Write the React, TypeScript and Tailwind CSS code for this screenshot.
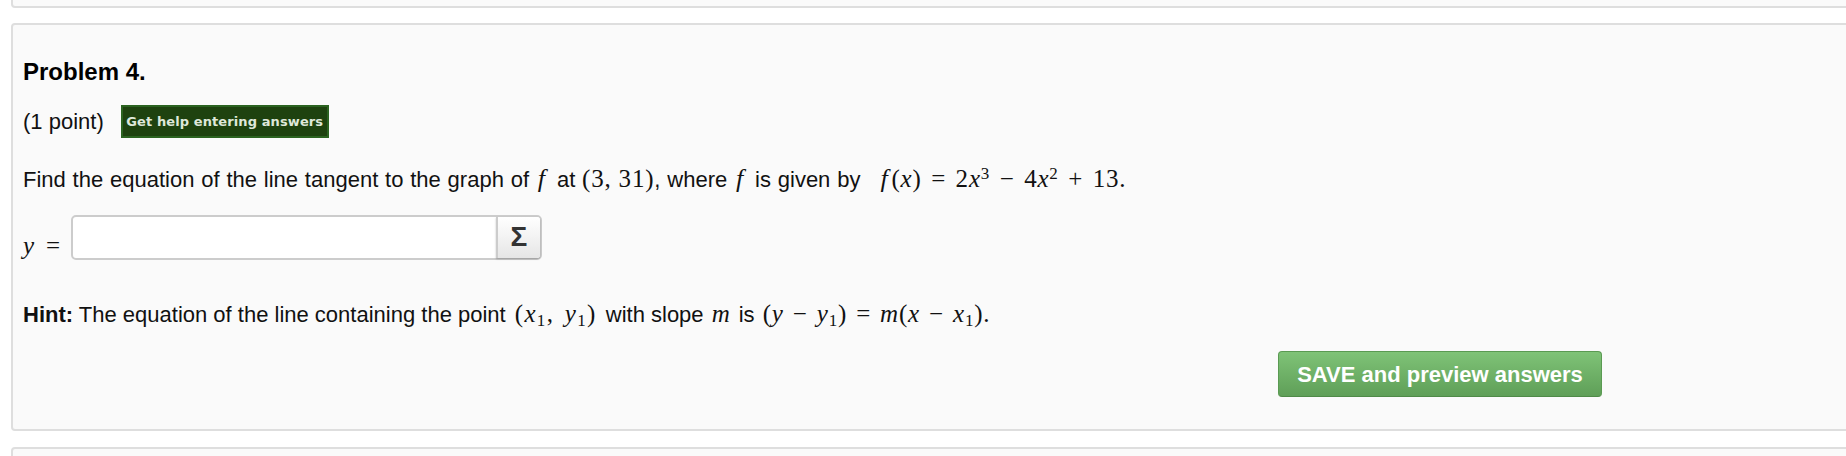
const serif = "font-['Liberation_Serif',serif]";

function V({ children }: { children: React.ReactNode }) {
  return <i className={serif}>{children}</i>;
}
function Sub({ children }: { children: React.ReactNode }) {
  return <sub className={`${serif} text-[17px]`}>{children}</sub>;
}
function Sup({ children }: { children: React.ReactNode }) {
  return <sup className={`${serif} text-[17px]`}>{children}</sup>;
}
function M({ children, className = "" }: { children: React.ReactNode; className?: string }) {
  return <span className={`${serif} text-[25px] tracking-[0.8px] ${className}`}>{children}</span>;
}
// italic f from the math font, it sits a bit wider than the running text
function F() {
  return <span className={`${serif} ml-[2px] mr-[5px] text-[26px]`}><V>f</V></span>;
}

export default function App() {
  return (
    <div className="h-[456px] overflow-hidden bg-white font-['Liberation_Sans',sans-serif] text-[22px] text-[#111]">
      <div className="h-[8px] ml-[11px] mr-[-8px] mb-[15px] rounded-b-[4px] border-2 border-t-0 border-[#dedede] bg-[#fafafa]" />

      <div className="h-[408px] ml-[11px] mr-[-8px] mb-[16px] rounded-[4px] border-2 border-[#dedede] bg-[#fafafa] pl-[10px] pt-[32px]">
        <h3 className="text-[24px] font-bold leading-[30px] text-black">Problem 4.</h3>

        <div className="mt-[18px] flex items-center h-[33px]">
          <span>(1 point)</span>
          <span className="ml-[17px] flex h-[33px] w-[208px] items-center justify-center border-2 border-[#2b6320] bg-[#1e420f] font-['DejaVu_Sans',sans-serif] text-[13px] font-bold tracking-[0.1px] text-[#dfe8da]">
            Get help entering answers
          </span>
        </div>

        <p className="mt-[26px] leading-[30px] [word-spacing:0.7px]">
          Find the equation of the line tangent to the graph of <F /> at <M className="[word-spacing:0px]">(3, 31)</M>, where <F /> is given by
          <M className="ml-[20px] [word-spacing:2.5px]">
            <span className="mr-[3px] text-[26px]"><V>f</V></span>(<V>x</V>) = 2<V>x</V><Sup>3</Sup> − 4<V>x</V><Sup>2</Sup> + 13.
          </M>
        </p>

        <div className="mt-[20px] flex h-[45px] items-end">
          <div className="mb-[-4px]">
            <M className="[word-spacing:4px]">
              <V>y</V> =
            </M>
          </div>
          <div className="ml-[10px] flex h-[45px] w-[471px] self-start rounded-[5px] border-2 border-[#cccccc] bg-white">
            <div className="flex-1" />
            <div className="flex w-[44px] items-center justify-center rounded-r-[3px] border-l-2 border-[#cccccc] bg-gradient-to-b from-white to-[#e6e6e6] pb-[2px] text-[28px] font-bold text-[#333] shadow-[0_1px_2px_rgba(0,0,0,0.25)]">
              Σ
            </div>
          </div>
        </div>

        <p className="mt-[39px] leading-[30px]">
          <b>Hint:</b> The equation of the line containing the point{" "}
          <M className="mx-[3px] tracking-[1.3px] [word-spacing:3px]">
            (<V>x</V>
            <Sub>1</Sub>, <V>y</V>
            <Sub>1</Sub>)
          </M>{" "}
          with slope <M className="mx-[2px]"><V>m</V></M> is{" "}
          <M className="ml-[2px] [word-spacing:2px]">
            (<V>y</V> − <V>y</V>
            <Sub>1</Sub>) = <V>m</V>(<V>x</V> − <V>x</V>
            <Sub>1</Sub>).
          </M>
        </p>

        <div className="mt-[21px] flex w-[1579px] justify-end">
          <button className="h-[46px] w-[324px] rounded-[4px] border border-[#5a9a52] border-b-[#4f8a48] bg-gradient-to-b from-[#7fc377] to-[#5f9f58] pt-[1px] text-[22px] font-bold text-white">
            SAVE and preview answers
          </button>
        </div>
      </div>

      <div className="h-[20px] ml-[11px] mr-[-8px] rounded-t-[4px] border-2 border-b-0 border-[#dedede] bg-[#fafafa]" />
    </div>
  );
}
